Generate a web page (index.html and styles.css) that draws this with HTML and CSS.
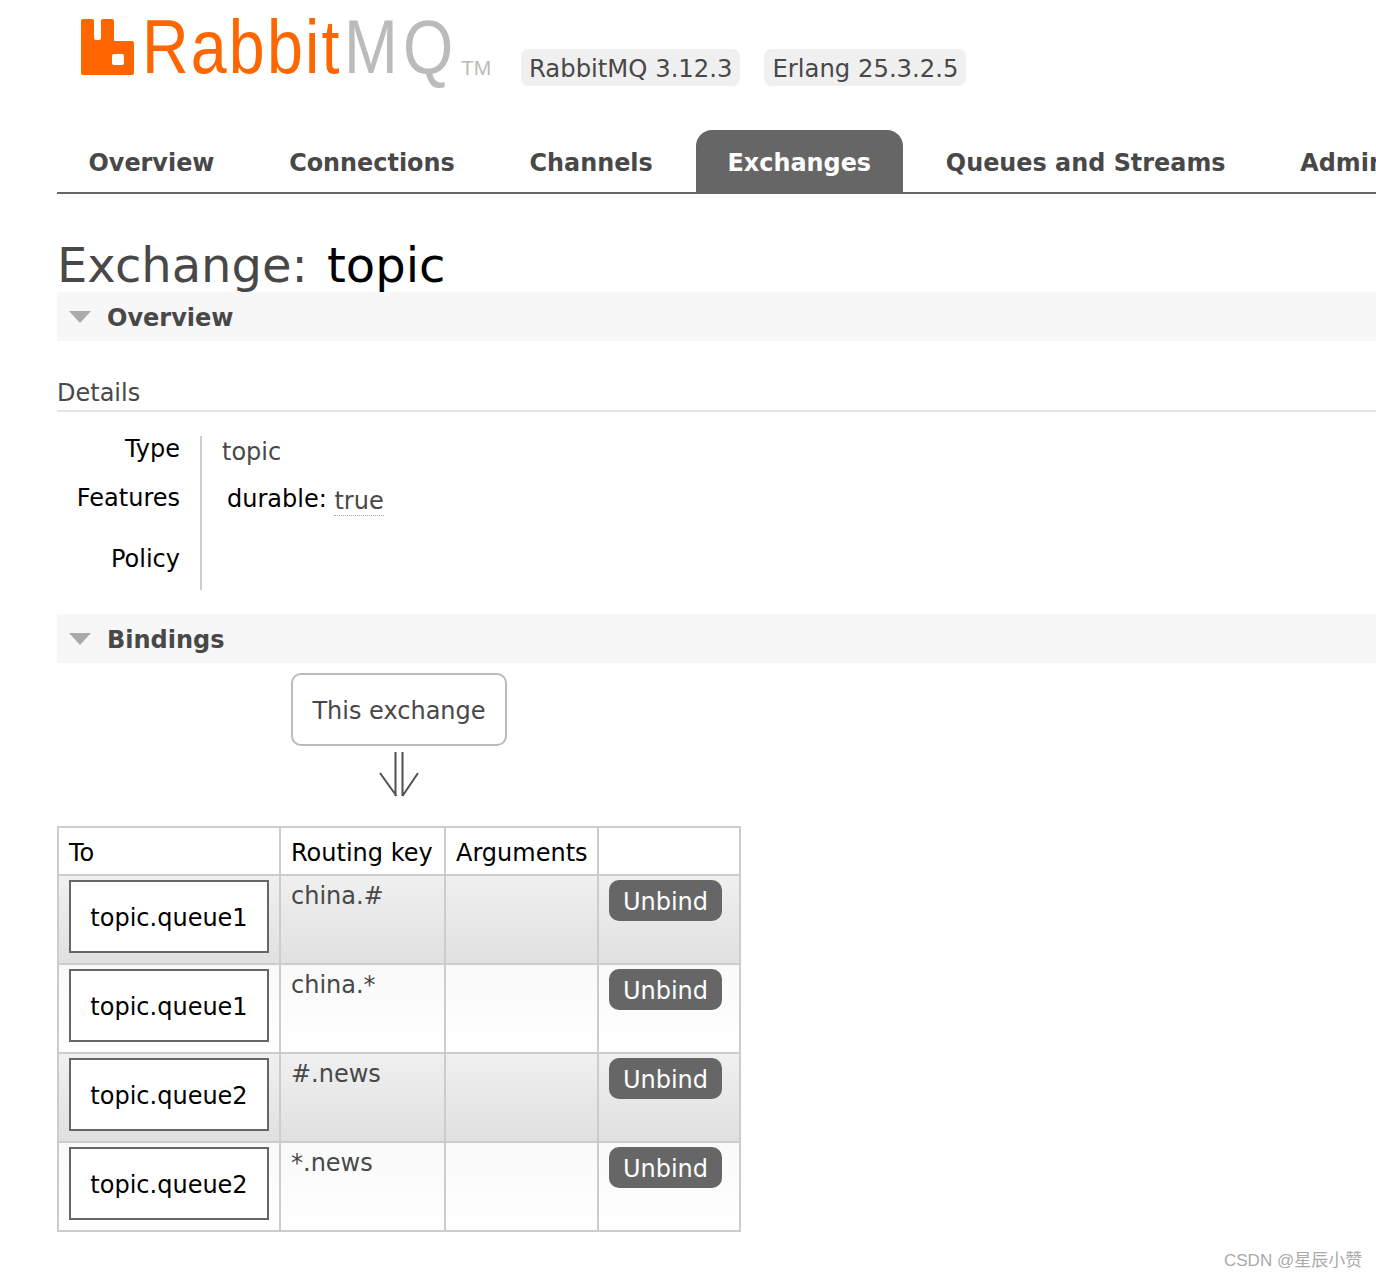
FILE: index.html
```html
<!DOCTYPE html>
<html lang="en">
<head>
    <meta charset="UTF-8">
    <title>RabbitMQ Management</title>
    <link rel="stylesheet" href="styles.css">
</head>
<body>
    <div id="header">
        <div id="logo">
            <svg class="logo-icon" width="53" height="56" viewBox="0 0 53 56">
                <path fill="#f60" fill-rule="evenodd" d="M2 0h9a2 2 0 0 1 2 2v17a2 2 0 0 0 2 2h3a2 2 0 0 0 2-2V2a2 2 0 0 1 2-2h9a2 2 0 0 1 2 2v19a1 1 0 0 0 1 1h17a2 2 0 0 1 2 2v30a2 2 0 0 1-2 2H2a2 2 0 0 1-2-2V2a2 2 0 0 1 2-2zM33 35a2 2 0 0 0-2 2v7a2 2 0 0 0 2 2h8a2 2 0 0 0 2-2v-7a2 2 0 0 0-2-2z"/>
            </svg>
            <span class="logo-word"><span class="logo-rabbit">Rabbit</span><span class="logo-mq">MQ</span></span>
            <span class="logo-tm">TM</span>
        </div>
        <span class="version">RabbitMQ 3.12.3</span>
        <span class="version">Erlang 25.3.2.5</span>
    </div>

    <ul id="tabs">
        <li>Overview</li>
        <li>Connections</li>
        <li>Channels</li>
        <li class="active">Exchanges</li>
        <li>Queues and Streams</li>
        <li>Admin</li>
    </ul>

    <h1>Exchange: <b>topic</b></h1>

    <div class="section-title"><span class="arrow"></span>Overview</div>
    <h3>Details</h3>
    <div id="details">
        <div class="labels">
            <div class="label-type">Type</div>
            <div class="label-features">Features</div>
            <div class="label-policy">Policy</div>
        </div>
        <div class="values">
            <div class="value-type">topic</div>
            <div class="value-features">durable: <abbr>true</abbr></div>
        </div>
    </div>

    <div class="section-title bindings-title"><span class="arrow"></span>Bindings</div>
    <div id="this-exchange">This exchange</div>
    <svg class="down-arrow" width="40" height="46" viewBox="0 0 40 46">
        <path fill="none" stroke="#505050" stroke-width="2" d="M16.500 0v44M23.500 0v44M1 21l16.500 23M39 21L23.500 44"/>
    </svg>

    <table id="bindings">
        <thead>
            <tr><th class="col-to">To</th><th class="col-key">Routing key</th><th class="col-args">Arguments</th><th class="col-btn"></th></tr>
        </thead>
        <tbody>
            <tr class="alt1"><td><div class="queue">topic.queue1</div></td><td>china.#</td><td></td><td><button>Unbind</button></td></tr>
            <tr class="alt2"><td><div class="queue">topic.queue1</div></td><td>china.*</td><td></td><td><button>Unbind</button></td></tr>
            <tr class="alt1"><td><div class="queue">topic.queue2</div></td><td>#.news</td><td></td><td><button>Unbind</button></td></tr>
            <tr class="alt2"><td><div class="queue">topic.queue2</div></td><td>*.news</td><td></td><td><button>Unbind</button></td></tr>
        </tbody>
    </table>

    <div id="watermark">CSDN @星辰小赞</div>
</body>
</html>
```

FILE: styles.css
```css
html, body {
    margin: 0;
    padding: 0;
}
body {
    position: relative;
    height: 1278px;
    overflow: hidden;
    padding-left: 57px;
    font-family: "DejaVu Sans", sans-serif;
    font-size: 24px;
    color: #484848;
    background: #fff;
}
#header {
    display: flex;
    align-items: flex-start;
    height: 130px;
}
#logo {
    display: flex;
    align-items: flex-start;
    width: 440px;
    margin-left: 24px;
    padding-top: 19px;
    flex-shrink: 0;
}
.logo-icon {
    flex-shrink: 0;
}
.logo-word {
    display: block;
    flex-shrink: 0;
    width: 319px;
    margin-left: 8px;
    margin-top: -17px;
    font-family: "Liberation Sans", sans-serif;
    font-size: 76px;
    line-height: 90px;
    letter-spacing: 2.5px;
    white-space: nowrap;
    transform: scaleX(0.85);
    transform-origin: left top;
}
.logo-rabbit {
    color: #f60;
}
.logo-mq {
    margin-left: 3px;
    letter-spacing: 6px;
    color: #bbb;
}
.logo-tm {
    margin-top: 37px;
    font-size: 21px;
    color: #bbb;
    font-family: "Liberation Sans", sans-serif;
}
.version {
    margin-top: 49px;
    margin-right: 24px;
    padding: 0 8px;
    height: 37px;
    font-size: 24.3px;
    line-height: 40px;
    background: #f0f0f0;
    border-radius: 8px;
    white-space: nowrap;
}
#tabs {
    display: flex;
    gap: 11.75px;
    list-style: none;
    margin: 0;
    padding: 0;
    height: 62px;
    border-bottom: 2px solid #666;
    font-size: 23.9px;
    white-space: nowrap;
}
#tabs li {
    padding: 0 31.5px;
    line-height: 66px;
    font-weight: bold;
    border-radius: 16px 16px 0 0;
}
#tabs li.active {
    background: #666;
    color: #fff;
}
h1 {
    margin: 0;
    padding-top: 40px;
    height: 58px;
    font-size: 48px;
    line-height: 62px;
    font-weight: normal;
    word-spacing: 4px;
}
h1 b {
    font-weight: normal;
    color: #000;
}
.section-title {
    box-sizing: border-box;
    height: 49px;
    padding-top: 3px;
    background: #f7f7f7;
    font-weight: bold;
    display: flex;
    align-items: center;
}
.arrow {
    width: 0;
    height: 0;
    margin: -2px 16px 0 12px;
    border-left: 11px solid transparent;
    border-right: 11px solid transparent;
    border-top: 12px solid #aaa;
}
h3 {
    margin: 36px 0 0;
    height: 33px;
    font-size: 24px;
    line-height: 33px;
    font-weight: normal;
    border-bottom: 2px solid #e4e4e4;
}
#details {
    display: flex;
    margin-top: 24px;
    height: 154px;
}
.labels {
    width: 123px;
    margin-top: -2px;
    text-align: right;
    color: #000;
}
.label-type, .label-features, .label-policy {
    height: 30px;
    line-height: 30px;
}
.label-features {
    margin-top: 19px;
}
.label-policy {
    margin-top: 31px;
}
.values {
    margin-left: 20px;
    padding-left: 20px;
    border-left: 2px solid #ccc;
}
.value-type {
    height: 30px;
    line-height: 32px;
}
.value-features {
    margin-top: 18px;
    padding-left: 5px;
    line-height: 30px;
    color: #000;
}
abbr {
    color: #484848;
    position: relative;
    top: 2px;
    border-bottom: 1px dotted #aaa;
}
.bindings-title {
    margin-top: 24px;
}
#this-exchange {
    width: 212px;
    height: 69px;
    line-height: 73px;
    margin: 10px 0 0 234px;
    text-align: center;
    border: 2px solid #bbb;
    border-radius: 10px;
}
.down-arrow {
    display: block;
    margin: 6px 0 0 322px;
}
#bindings {
    margin-top: 28px;
    border-collapse: collapse;
    table-layout: fixed;
    width: 684px;
    border: 2px solid #ccc;
}
#bindings th, #bindings td {
    border: 2px solid #ccc;
    padding: 0 10px;
    box-sizing: border-box;
    vertical-align: top;
}
#bindings th {
    height: 48px;
    line-height: 42px;
    padding-top: 4px;
    font-weight: normal;
    text-align: left;
    color: #000;
    white-space: nowrap;
}
.col-to { width: 222px; }
.col-key { width: 165px; }
.col-args { width: 153px; }
.col-btn { width: 142px; }
#bindings td {
    height: 89px;
    line-height: 40px;
}
.alt1 td {
    background: linear-gradient(#f0f0f0, #e0e0e0);
}
.alt2 td {
    background: linear-gradient(#f9f9f9, #fff);
}
.queue {
    box-sizing: border-box;
    width: 200px;
    height: 73px;
    margin-top: 4px;
    line-height: 72px;
    text-align: center;
    color: #000;
    background: #fff;
    border: 2px solid #666;
}
button {
    display: block;
    width: 113px;
    height: 41px;
    margin-top: 4px;
    padding: 4px 0 0;
    font-family: inherit;
    font-size: 24px;
    line-height: 37px;
    color: #fff;
    background: #666;
    border: 0;
    border-radius: 10px;
}
#watermark {
    position: absolute;
    left: 1224px;
    top: 1249px;
    font-family: "Liberation Sans", "Noto Sans CJK SC", sans-serif;
    font-size: 17px;
    line-height: 24px;
    color: #aaa;
    white-space: nowrap;
}
```
